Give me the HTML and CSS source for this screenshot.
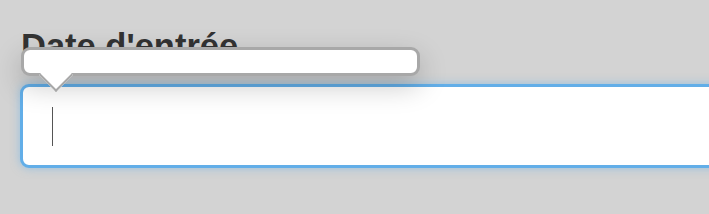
FILE: index.html
```html
<!DOCTYPE html>
<html lang="fr">
<head>
  <meta charset="UTF-8">
  <meta name="viewport" content="width=device-width, initial-scale=1.0">
  <title>Date d'entrée</title>
  <link rel="stylesheet" href="styles.css">
</head>
<body>

  <div class="champ">
    <label class="champ-label" for="entree">Date d'entrée</label>
    <div class="bulle"></div>
    <div class="champ-input" id="entree">
      <span class="curseur"></span>
    </div>
  </div>

</body>
</html>
```

FILE: styles.css
```css
* {
  margin: 0;
  padding: 0;
  box-sizing: border-box;
}

body {
  font-family: "Liberation Sans", Arial, sans-serif;
  background-color: #d3d3d3;
  color: #333;
  overflow: hidden;
  width: 709px;
  height: 214px;
}

.champ {
  position: relative;
  padding: 27px 0 0 20px;
}

.champ-label {
  display: block;
  font-size: 34.5px;
  font-weight: bold;
  line-height: 39px;
  color: #333;
  padding-left: 1px;
}

.champ-input {
  width: 720px;
  height: 84px;
  margin-top: 18px;
  background-color: #fff;
  border: 3px solid #62aee8;
  border-radius: 9px;
  box-shadow: 0 0 10px rgba(98, 174, 232, 0.55);
  padding: 20px 0 0 29px;
}

.curseur {
  display: block;
  width: 1px;
  height: 39px;
  background-color: #555;
}

/* bulle d'aide au-dessus du champ */
.bulle {
  position: absolute;
  left: 21px;
  top: 47px;
  width: 399px;
  height: 29px;
  background-color: #fff;
  border: 3px solid #a8a8a8;
  border-radius: 9px;
  box-shadow: 0 10px 28px rgba(0, 0, 0, 0.22);
  z-index: 10;
}

.bulle::after {
  content: "";
  position: absolute;
  left: 20px;
  top: 13px;
  width: 22px;
  height: 22px;
  background-color: #fff;
  border-right: 2px solid #a8a8a8;
  border-bottom: 2px solid #a8a8a8;
  transform: rotate(45deg);
}
```
